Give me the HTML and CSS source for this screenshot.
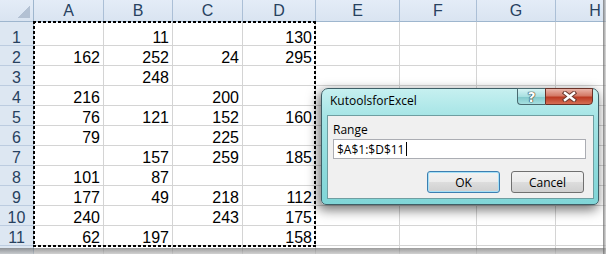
FILE: index.html
```html
<!DOCTYPE html>
<html lang="en">
<head>
  <meta charset="UTF-8" />
  <meta name="viewport" content="width=device-width, initial-scale=1.0" />
  <title>Kutools for Excel - Range</title>
  <link rel="stylesheet" href="styles.css">
</head>
<body>
  <div class="screen">
    <div class="sheet">
      <div class="row head">
        <div class="corner"></div>
        <div class="col">A</div><div class="col">B</div><div class="col">C</div><div class="col">D</div>
        <div class="col">E</div><div class="col">F</div><div class="col">G</div><div class="col">H</div>
      </div>
      <div class="row tall">
        <div class="num">1</div>
        <div class="cell"></div><div class="cell">11</div><div class="cell"></div><div class="cell">130</div>
        <div class="cell"></div><div class="cell"></div><div class="cell"></div><div class="cell"></div>
      </div>
      <div class="row">
        <div class="num">2</div>
        <div class="cell">162</div><div class="cell">252</div><div class="cell">24</div><div class="cell">295</div>
        <div class="cell"></div><div class="cell"></div><div class="cell"></div><div class="cell"></div>
      </div>
      <div class="row">
        <div class="num">3</div>
        <div class="cell"></div><div class="cell">248</div><div class="cell"></div><div class="cell"></div>
        <div class="cell"></div><div class="cell"></div><div class="cell"></div><div class="cell"></div>
      </div>
      <div class="row">
        <div class="num">4</div>
        <div class="cell">216</div><div class="cell"></div><div class="cell">200</div><div class="cell"></div>
        <div class="cell"></div><div class="cell"></div><div class="cell"></div><div class="cell"></div>
      </div>
      <div class="row">
        <div class="num">5</div>
        <div class="cell">76</div><div class="cell">121</div><div class="cell">152</div><div class="cell">160</div>
        <div class="cell"></div><div class="cell"></div><div class="cell"></div><div class="cell"></div>
      </div>
      <div class="row">
        <div class="num">6</div>
        <div class="cell">79</div><div class="cell"></div><div class="cell">225</div><div class="cell"></div>
        <div class="cell"></div><div class="cell"></div><div class="cell"></div><div class="cell"></div>
      </div>
      <div class="row">
        <div class="num">7</div>
        <div class="cell"></div><div class="cell">157</div><div class="cell">259</div><div class="cell">185</div>
        <div class="cell"></div><div class="cell"></div><div class="cell"></div><div class="cell"></div>
      </div>
      <div class="row">
        <div class="num">8</div>
        <div class="cell">101</div><div class="cell">87</div><div class="cell"></div><div class="cell"></div>
        <div class="cell"></div><div class="cell"></div><div class="cell"></div><div class="cell"></div>
      </div>
      <div class="row">
        <div class="num">9</div>
        <div class="cell">177</div><div class="cell">49</div><div class="cell">218</div><div class="cell">112</div>
        <div class="cell"></div><div class="cell"></div><div class="cell"></div><div class="cell"></div>
      </div>
      <div class="row">
        <div class="num">10</div>
        <div class="cell">240</div><div class="cell"></div><div class="cell">243</div><div class="cell">175</div>
        <div class="cell"></div><div class="cell"></div><div class="cell"></div><div class="cell"></div>
      </div>
      <div class="row">
        <div class="num">11</div>
        <div class="cell">62</div><div class="cell">197</div><div class="cell"></div><div class="cell">158</div>
        <div class="cell"></div><div class="cell"></div><div class="cell"></div><div class="cell"></div>
      </div>
      <div class="row">
        <div class="num"></div>
        <div class="cell"></div><div class="cell"></div><div class="cell"></div><div class="cell"></div>
        <div class="cell"></div><div class="cell"></div><div class="cell"></div><div class="cell"></div>
      </div>
    </div>

    <!-- copy marquee around A1:D11 -->
    <div class="marquee"></div>

    <div class="dialog">
      <div class="titlebar">
        <span class="title">KutoolsforExcel</span>
        <div class="caps">
          <span class="cap help">?</span>
          <span class="cap close">
            <svg width="15" height="11" viewBox="0 0 15 11">
              <path d="M3 2 L12 9 M12 2 L3 9" stroke="#6b3a30" stroke-width="4.4" stroke-linecap="square" fill="none"/>
              <path d="M3 2 L12 9 M12 2 L3 9" stroke="#fff" stroke-width="2.4" stroke-linecap="square" fill="none"/>
            </svg>
          </span>
        </div>
      </div>
      <div class="panel">
        <div class="label">Range</div>
        <div class="field">$A$1:$D$11<span class="caret"></span></div>
        <div class="actions">
          <button class="btn default">OK</button>
          <button class="btn">Cancel</button>
        </div>
      </div>
    </div>

    <div class="edge-bottom"></div>
    <div class="edge-right"></div>
  </div>
</body>
</html>
```

FILE: styles.css
```css
body {
  margin: 0;
  padding: 0;
  background-color: #fff;
}
.screen {
  position: relative;
  width: 606px;
  height: 254px;
  overflow: hidden;
  font-family: 'Liberation Sans', Arial, sans-serif;
}
.row {
  display: grid;
  grid-template-columns: 34px 70px 69px 70px 73px 84px 77px 79px 79px;
  height: 20px;
}
.row.head {
  height: 22px;
}
.row.tall {
  height: 24px;
}
.row > div {
  box-sizing: border-box;
  border-right: 1px solid #d4d4d4;
  border-bottom: 1px solid #d4d4d4;
  font-size: 16px;
  line-height: 14px;
}
.cell {
  display: flex;
  align-items: flex-end;
  justify-content: flex-end;
  padding-right: 3px;
  color: #000;
}
.row > .num {
  display: flex;
  align-items: flex-end;
  justify-content: center;
  background-color: #dde7f2;
  border-right-color: #9eb6ce;
  border-bottom-color: #bccce0;
  color: #27415f;
}
.row > .col {
  display: flex;
  align-items: center;
  justify-content: center;
  background: linear-gradient(#e4ecf7, #d9e4f1);
  border-right-color: #abbfd6;
  border-bottom-color: #9eb6ce;
  color: #27415f;
}
.row > .corner {
  background: linear-gradient(135deg, transparent 50%, #b3c1d3 50%) no-repeat right 3px bottom 3px / 13px 13px,
              linear-gradient(#e4ecf7, #d9e4f1);
  border-right-color: #9eb6ce;
  border-bottom-color: #9eb6ce;
}

.marquee {
  position: absolute;
  left: 33px;
  top: 21px;
  width: 283px;
  height: 226px;
  background:
    repeating-linear-gradient(90deg, #000 0 3px, transparent 3px 5px) left top / 100% 2px no-repeat,
    repeating-linear-gradient(90deg, #000 0 3px, transparent 3px 5px) left bottom / 100% 2px no-repeat,
    repeating-linear-gradient(180deg, #000 0 3px, transparent 3px 5px) left top / 2px 100% no-repeat,
    repeating-linear-gradient(180deg, #000 0 3px, transparent 3px 5px) right top / 2px 100% no-repeat;
}

.dialog {
  position: absolute;
  left: 321px;
  top: 88px;
  width: 278px;
  height: 117px;
  box-sizing: border-box;
  display: flex;
  flex-direction: column;
  padding: 0 4px 5px 5px;
  border: 1px solid #3e5e66;
  border-radius: 7px 7px 5px 5px;
  background: linear-gradient(#c6f0f0, #a4e4e5 25%, #8cdadb 70%, #80d5d7);
  box-shadow: -2px 4px 12px 1px rgba(0,0,0,0.55);
  font-family: 'Open Sans', 'Noto Sans', sans-serif;
  font-size: 12px;
  color: #000;
}
.titlebar {
  height: 26px;
  display: flex;
  justify-content: space-between;
  align-items: flex-start;
}
.title {
  margin: 5px 0 0 3px;
  line-height: 14px;
}
.caps {
  display: flex;
  margin: -1px 1px 0 0;
}
.cap {
  height: 17px;
  box-sizing: border-box;
  border: 1px solid #4a6a70;
  display: flex;
  align-items: center;
  justify-content: center;
}
.cap.help {
  width: 28px;
  border-right: none;
  border-radius: 0 0 0 4px;
  background: linear-gradient(#d6f4f4, #a8e0e1 50%, #80c8ca 51%, #a6e0e1);
  color: #fff;
  font-family: 'DejaVu Sans', sans-serif;
  font-weight: bold;
  font-size: 14px;
  text-shadow: 0 0 1px #233, 0 0 1px #233, 0 0 1px #233;
}
.cap.close {
  width: 48px;
  border-color: #6a3228;
  border-radius: 0 0 4px 0;
  background: linear-gradient(#eab4a8, #d47a66 45%, #bb3a22 55%, #d66e55);
}
.panel {
  flex: 1;
  background-color: #f0f0f0;
  border: 1px solid #6f9ea1;
  padding: 7px 7px 0 5px;
}
.label {
  line-height: 14px;
}
.field {
  margin-top: 2px;
  height: 20px;
  box-sizing: border-box;
  display: flex;
  align-items: center;
  padding-left: 3px;
  border: 1px solid #abadb3;
  background-color: #fff;
}
.caret {
  display: inline-block;
  width: 1px;
  height: 14px;
  margin-left: 2px;
  background-color: #000;
}
.actions {
  display: flex;
  justify-content: flex-end;
  gap: 11px;
  margin-top: 12px;
  padding-right: 2px;
}
.btn {
  width: 73px;
  height: 22px;
  padding: 0;
  border: 1px solid #707070;
  border-radius: 3px;
  background: linear-gradient(#f2f2f2, #ebebeb 50%, #dddddd 51%, #cfcfcf);
  font-family: inherit;
  font-size: 12px;
  color: #000;
}
.btn.default {
  border-color: #3c7fb1;
  box-shadow: inset 0 0 0 1px #a6e0f7;
}

.edge-bottom {
  position: absolute;
  left: 0;
  right: 0;
  bottom: 0;
  height: 6px;
  background: linear-gradient(rgba(90,90,90,0.6), rgba(190,190,190,0.7));
}
.edge-right {
  position: absolute;
  top: 0;
  right: 0;
  bottom: 0;
  width: 3px;
  background: linear-gradient(90deg, rgba(90,90,90,0.7), rgba(200,200,200,0.6));
}
```
